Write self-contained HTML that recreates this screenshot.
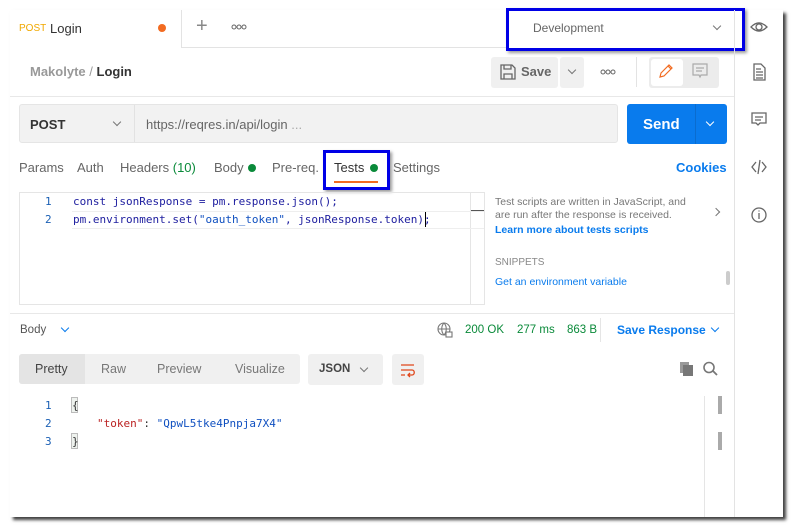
<!DOCTYPE html>
<html><head><meta charset="utf-8"><style>
*{margin:0;padding:0;box-sizing:border-box}
body{width:794px;height:528px;background:#fff;position:relative;overflow:hidden;font-family:"Liberation Sans",sans-serif;color:#505050}
.a{position:absolute}
.win{left:10px;top:10px;width:773px;height:507px;background:#fff;box-shadow:3px 3px 3px rgba(0,0,0,.75)}
.t{position:absolute;font-size:13px;white-space:nowrap}
.mono{font-family:"DejaVu Sans Mono","Liberation Mono",monospace;font-size:11px}
.chev{position:absolute;width:6px;height:6px;border-right:1.3px solid #777;border-bottom:1.3px solid #777;transform:rotate(45deg)}
.g{color:#0a8a3a}
.dot{position:absolute;width:8px;height:8px;border-radius:50%;background:#0a8a3a}
</style></head><body>
<div class="a win"></div>
<!-- top tab bar -->
<div class="a" style="left:181px;top:10px;width:1px;height:37px;background:#e3e3e3"></div>
<div class="a" style="left:181px;top:47px;width:553px;height:1px;background:#e3e3e3"></div>
<div class="t" style="left:19px;top:23px;font-size:10px;color:#f0a800">POST</div>
<div class="t" style="left:50px;top:21px;color:#333">Login</div>
<div class="a" style="left:158px;top:24px;width:8px;height:8px;border-radius:50%;background:#f26b21"></div>
<div class="t" style="left:196px;top:15px;font-size:20px;color:#888">+</div>
<svg class="a" style="left:231px;top:24px" width="16" height="6" fill="none" stroke="#666" stroke-width="1"><circle cx="3" cy="3" r="2"/><circle cx="8" cy="3" r="2"/><circle cx="13" cy="3" r="2"/></svg>
<div class="a" style="left:506px;top:8px;width:239px;height:43px;border:3px solid #0000e6;box-shadow:2px 2px 3px rgba(0,0,0,.4);background:#fff"></div>
<div class="t" style="left:533px;top:21px;color:#666;font-size:12px">Development</div>
<div class="chev" style="left:714px;top:23px"></div>
<!-- sidebar -->
<div class="a" style="left:734px;top:10px;width:1px;height:507px;background:#e3e3e3"></div>
<svg class="a" style="left:748px;top:18px" width="22" height="212" viewBox="0 0 22 212" fill="none" stroke="#666" stroke-width="1.3">
<path d="M3 9 Q11 1 19 9 Q11 17 3 9Z"/><circle cx="11" cy="9" r="3"/>
<path d="M6 46h7l4 4v12H6z M8 51h5 M8 54h7 M8 57h7 M8 60h7"/>
<path d="M4 95h14v10h-6l-2 2-2-2H4z M7 99h8 M7 102h6"/>
<path d="M8 144l-4 5 4 5 M14 144l4 5-4 5 M12 142l-2 14"/>
<circle cx="11" cy="197" r="7"/><path d="M11 195v6 M11 192.5v1"/>
</svg>
<!-- breadcrumb -->
<div class="t" style="left:30px;top:64px;color:#999;font-weight:bold">Makolyte <span style="font-weight:normal">/</span> <span style="color:#333">Login</span></div>
<div class="a" style="left:491px;top:57px;width:67px;height:31px;background:#f0f0f0;border-radius:3px"></div>
<svg class="a" style="left:500px;top:64px" width="16" height="16" fill="none" stroke="#666" stroke-width="1.3"><path d="M1 1h11l3 3v11H1z M4 1v4h7V1 M4 15v-5h8v5"/></svg>
<div class="t" style="left:521px;top:64px;font-weight:bold;color:#666">Save</div>
<div class="a" style="left:560px;top:57px;width:24px;height:31px;background:#f0f0f0;border-radius:3px"></div>
<div class="chev" style="left:569px;top:67px"></div>
<svg class="a" style="left:600px;top:69px" width="16" height="6" fill="none" stroke="#666" stroke-width="1"><circle cx="3" cy="3" r="2"/><circle cx="8" cy="3" r="2"/><circle cx="13" cy="3" r="2"/></svg>
<div class="a" style="left:636px;top:57px;width:1px;height:30px;background:#e3e3e3"></div>
<div class="a" style="left:649px;top:57px;width:70px;height:31px;background:#ececec;border-radius:3px"></div>
<div class="a" style="left:651px;top:59px;width:32px;height:27px;background:#fff;border-radius:3px"></div>
<svg class="a" style="left:658px;top:63px" width="16" height="16" fill="none" stroke="#f26b21" stroke-width="1.2"><path d="M2 14l1-4 8-8 3 3-8 8z M10 3l3 3"/></svg>
<svg class="a" style="left:692px;top:63px" width="16" height="16" fill="none" stroke="#aaa" stroke-width="1.2"><path d="M1 1h14v11H9l-1 2-1-2H1z M4 5h8 M4 8h6"/></svg>
<div class="a" style="left:10px;top:96px;width:724px;height:1px;background:#e8e8e8"></div>
<!-- URL row -->
<div class="a" style="left:19px;top:104px;width:599px;height:39px;background:#f2f2f2;border:1px solid #e5e5e5;border-radius:3px"></div>
<div class="a" style="left:134px;top:105px;width:1px;height:37px;background:#e2e2e2"></div>
<div class="t" style="left:30px;top:117px;font-weight:bold;color:#333">POST</div>
<div class="chev" style="left:114px;top:119px"></div>
<div class="t" style="left:146px;top:117px;color:#666">https://reqres.in/api/login <span style="color:#aaa">...</span></div>
<div class="a" style="left:627px;top:104px;width:100px;height:40px;background:#097bed;border-radius:3px"></div>
<div class="a" style="left:695px;top:104px;width:1px;height:40px;background:#0a6ccf"></div>
<div class="t" style="left:643px;top:116px;color:#fff;font-weight:bold;font-size:15px">Send</div>
<div class="chev" style="left:707px;top:119px;border-color:#fff"></div>
<!-- tabs -->
<div class="t" style="left:19px;top:160px;color:#666">Params</div>
<div class="t" style="left:77px;top:160px;color:#666">Auth</div>
<div class="t" style="left:120px;top:160px;color:#666">Headers <span class="g">(10)</span></div>
<div class="t" style="left:214px;top:160px;color:#666">Body</div>
<div class="dot" style="left:248px;top:164px"></div>
<div class="t" style="left:272px;top:160px;color:#666">Pre-req.</div>
<div class="a" style="left:323px;top:150px;width:67px;height:40px;border:3px solid #0000e6;box-shadow:2px 2px 3px rgba(0,0,0,.4)"></div>
<div class="t" style="left:334px;top:160px;color:#333">Tests</div>
<div class="dot" style="left:370px;top:164px"></div>
<div class="a" style="left:334px;top:181px;width:44px;height:2px;background:#f26b21"></div>
<div class="t" style="left:393px;top:160px;color:#666">Settings</div>
<div class="t" style="left:676px;top:160px;color:#097bed;font-weight:bold">Cookies</div>
<!-- editor -->
<div class="a" style="left:19px;top:192px;width:466px;height:113px;border:1px solid #e5e5e5"></div>
<div class="a" style="left:470px;top:193px;width:1px;height:111px;background:#e5e5e5"></div>
<div class="a" style="left:471px;top:210px;width:13px;height:2px;background:#555"></div>
<div class="a" style="left:72px;top:211px;width:412px;height:18px;border-top:1px solid #eee;border-bottom:1px solid #eee"></div>
<div class="t mono" style="left:45px;top:195px;color:#1a5fb4">1</div>
<div class="t mono" style="left:45px;top:213px;color:#1a5fb4">2</div>
<div class="t mono" style="left:73px;top:195px;color:#2020a0">const jsonResponse = pm.response.json();</div>
<div class="t mono" style="left:73px;top:213px;color:#2020a0">pm.environment.set(<span style="color:#1050c0">"oauth_token"</span>, jsonResponse.token);</div>
<div class="a" style="left:425px;top:212px;width:1px;height:15px;background:#000"></div>
<div class="t" style="left:495px;top:196px;font-size:10.5px;color:#777;line-height:13px">Test scripts are written in JavaScript, and<br>are run after the response is received.</div>
<div class="t" style="left:495px;top:224px;font-size:10.5px;color:#097bed;font-weight:bold">Learn more about tests scripts</div>
<div class="t" style="left:495px;top:257px;font-size:10px;color:#888">SNIPPETS</div>
<div class="t" style="left:495px;top:276px;font-size:10.5px;color:#097bed">Get an environment variable</div>
<div class="chev" style="left:713px;top:209px;transform:rotate(-45deg)"></div>
<div class="a" style="left:726px;top:271px;width:4px;height:14px;background:#ccc;border-radius:2px"></div>
<div class="a" style="left:10px;top:313px;width:724px;height:1px;background:#e8e8e8"></div>
<!-- response bar -->
<div class="t" style="left:20px;top:324px;font-size:11.5px;color:#555">Body</div>
<div class="chev" style="left:62px;top:325px;border-color:#097bed"></div>
<svg class="a" style="left:437px;top:322px" width="16" height="16" fill="none" stroke="#777" stroke-width="1.1"><circle cx="7" cy="7" r="6"/><path d="M1 7h12 M7 1c-3 3-3 9 0 12 M7 1c3 3 3 9 0 12"/><rect x="9" y="10" width="6" height="5" fill="#fff"/></svg>
<div class="t g" style="left:465px;top:324px;font-size:11.5px">200 OK</div>
<div class="t g" style="left:517px;top:324px;font-size:11.5px">277 ms</div>
<div class="t g" style="left:567px;top:324px;font-size:11.5px">863 B</div>
<div class="a" style="left:600px;top:318px;width:1px;height:24px;background:#e5e5e5"></div>
<div class="t" style="left:617px;top:323px;font-size:12px;color:#097bed;font-weight:bold">Save Response</div>
<div class="chev" style="left:712px;top:325px;border-color:#097bed"></div>
<div class="a" style="left:19px;top:354px;width:281px;height:30px;background:#f0f0f0;border-radius:3px"></div>
<div class="a" style="left:19px;top:354px;width:66px;height:30px;background:#e4e4e4;border-radius:3px 0 0 3px"></div>
<div class="t" style="left:35px;top:362px;font-size:12.5px;color:#444">Pretty</div>
<div class="t" style="left:101px;top:362px;font-size:12.5px;color:#777">Raw</div>
<div class="t" style="left:157px;top:362px;font-size:12.5px;color:#777">Preview</div>
<div class="t" style="left:235px;top:362px;font-size:12.5px;color:#777">Visualize</div>
<div class="a" style="left:308px;top:354px;width:75px;height:31px;background:#f0f0f0;border-radius:3px"></div>
<div class="t" style="left:319px;top:363px;font-size:11.5px;color:#444;font-weight:bold">JSON</div>
<div class="chev" style="left:361px;top:365px"></div>
<div class="a" style="left:392px;top:354px;width:32px;height:31px;background:#f0f0f0;border-radius:3px"></div>
<svg class="a" style="left:400px;top:362px" width="16" height="16" fill="none" stroke="#e0461a" stroke-width="1.3"><path d="M1 3h13 M1 8h11c3 0 3 5 0 5H9 M10 11l-2 2 2 2 M1 13h4"/></svg>
<svg class="a" style="left:679px;top:361px" width="40" height="16"><rect x="1" y="1" width="9" height="11" fill="#999"/><rect x="4" y="4" width="10" height="11" fill="#777"/><circle cx="30" cy="6.5" r="5" fill="none" stroke="#777" stroke-width="1.6"/><path d="M34 10l4 4" stroke="#777" stroke-width="1.8"/></svg>
<!-- response body -->
<div class="t mono" style="left:45px;top:399px;color:#1a5fb4">1</div>
<div class="t mono" style="left:45px;top:417px;color:#1a5fb4">2</div>
<div class="t mono" style="left:45px;top:435px;color:#1a5fb4">3</div>
<div class="a" style="left:71px;top:397px;width:7px;height:16px;background:#eef2ee;border:1px solid #bbb"></div>
<div class="t mono" style="left:72px;top:399px;color:#333">{</div>
<div class="t mono" style="left:97px;top:417px;color:#b22"><span>"token"</span><span style="color:#333">: </span><span style="color:#1050c0">"QpwL5tke4Pnpja7X4"</span></div>
<div class="a" style="left:71px;top:433px;width:7px;height:16px;background:#eef2ee;border:1px solid #bbb"></div>
<div class="t mono" style="left:72px;top:435px;color:#333">}</div>
<div class="a" style="left:704px;top:396px;width:1px;height:121px;background:#e5e5e5"></div>
<div class="a" style="left:718px;top:396px;width:4px;height:18px;background:#aaa"></div>
<div class="a" style="left:718px;top:432px;width:4px;height:18px;background:#aaa"></div>
</body></html>
